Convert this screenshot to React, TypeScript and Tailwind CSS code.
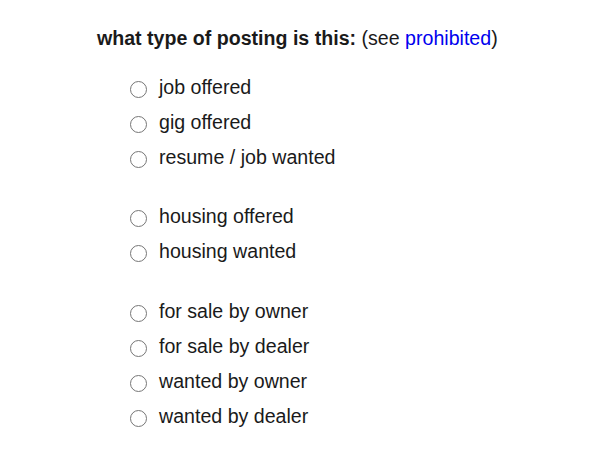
const groups = [
  ["job offered", "gig offered", "resume / job wanted"],
  ["housing offered", "housing wanted"],
  ["for sale by owner", "for sale by dealer", "wanted by owner", "wanted by dealer"],
];

function Radio() {
  return (
    <span className="mt-[8px] box-border h-[17px] w-[17px] shrink-0 rounded-full border border-[#767676] bg-white" />
  );
}

export default function App() {
  return (
    <div className="h-[451px] w-[600px] bg-white font-['Liberation_Sans',Arial,sans-serif] text-[#1a1a1a]">
      <div className="pl-[97px] pt-[24px] text-[19.6px] leading-[28px]">
        <span className="font-bold">what type of posting is this:</span>{" "}
        (see <a className="text-[#0000ee]">prohibited</a>)
      </div>
      <div className="mt-[21px] flex flex-col gap-[24px] pl-[130px]">
        {groups.map((g, i) => (
          <div key={i} className={i === 2 ? "mt-[1px] flex flex-col" : "flex flex-col"}>
            {g.map((label) => (
              <label key={label} className="flex h-[35px] items-start gap-[12px] text-[19.6px] leading-[28px]">
                <Radio />
                <span>{label}</span>
              </label>
            ))}
          </div>
        ))}
      </div>
    </div>
  );
}
